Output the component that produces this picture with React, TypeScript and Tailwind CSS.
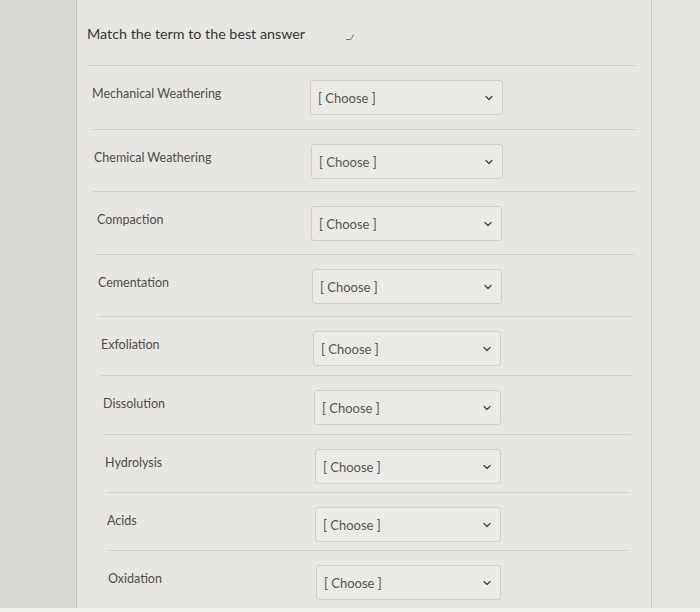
import { ChevronDown } from "lucide-react";

type Row = {
  term: string;
  rowClass: string;
  labelClass: string;
  boxClass: string;
};

// the photo is a bit skewed, so each row sits slightly further in
const rows: Row[] = [
  { term: "Mechanical Weathering", rowClass: "ml-[11px] mr-[14px] h-[64px]", labelClass: "pl-[4px] w-[222px]", boxClass: "w-[193px]" },
  { term: "Chemical Weathering", rowClass: "ml-[14px] mr-[15px] h-[62px]", labelClass: "pl-[3px] w-[220px]", boxClass: "w-[192px]" },
  { term: "Compaction", rowClass: "ml-[16px] mr-[16px] h-[63px]", labelClass: "pl-[4px] w-[218px]", boxClass: "w-[191px]" },
  { term: "Cementation", rowClass: "ml-[19px] mr-[17px] h-[62px]", labelClass: "pl-[2px] w-[216px]", boxClass: "w-[190px]" },
  { term: "Exfoliation", rowClass: "ml-[21px] mr-[18px] h-[59px]", labelClass: "pl-[3px] w-[215px]", boxClass: "w-[188px]" },
  { term: "Dissolution", rowClass: "ml-[24px] mr-[19px] h-[59px]", labelClass: "pl-[2px] w-[213px]", boxClass: "w-[187px]" },
  { term: "Hydrolysis", rowClass: "ml-[26px] mr-[20px] h-[58px]", labelClass: "pl-[2px] w-[212px]", boxClass: "w-[186px]" },
  { term: "Acids", rowClass: "ml-[29px] mr-[21px] h-[58px]", labelClass: "pl-[1px] w-[209px]", boxClass: "w-[186px]" },
  { term: "Oxidation", rowClass: "ml-[31px] mr-[23px] h-[57px]", labelClass: "pl-0 w-[208px]", boxClass: "w-[185px]" },
];

export default function App() {
  return (
    <div className="w-[700px] h-[612px] overflow-hidden bg-[#dddbd7] font-['Lato','Liberation_Sans',sans-serif] flex flex-col">
      <div className="flex flex-1">
        <div className="w-[76px] bg-[#dad8d4]"></div>
        <div className="w-[576px] border-x border-[#c4c2be] bg-[#e8e6e2] flex flex-col">
          <div className="pt-[24px] pl-[10px] h-[65px] flex items-start gap-[40px]">
            <h1 className="text-[14.3px] leading-[20px] text-[#353535]">
              Match the term to the best answer
            </h1>
            <svg width="10" height="8" viewBox="0 0 10 8" className="mt-[9px]">
              <path d="M1 6.5 L6 6.5 L8.5 1.5" fill="none" stroke="#777" strokeWidth="1" />
            </svg>
          </div>

          {rows.map((row) => (
            <QuestionRow key={row.term} row={row} />
          ))}
        </div>
        <div className="flex-1 bg-[#e5e3df]"></div>
      </div>
      <div className="h-[4px] bg-[#f1f0ed]"></div>
    </div>
  );
}

function QuestionRow({ row }: { row: Row }) {
  return (
    <div className={`${row.rowClass} border-t border-[#d3d0cb] flex items-start shrink-0`}>
      <div className={`${row.labelClass} mt-[20px] text-[12.5px] leading-[16px] text-[#4d4d4d]`}>
        {row.term}
      </div>
      <div
        className={`${row.boxClass} mt-[14px] h-[35px] border border-[#d0cecb] rounded-[3px] bg-[#eceae7] flex items-center justify-between pl-[7px] pr-[7px]`}
      >
        <span className="text-[13px] text-[#555] mt-[2px]">[ Choose ]</span>
        <ChevronDown size={12} strokeWidth={2.75} className="text-[#4a4a4a] mt-[1px]" />
      </div>
    </div>
  );
}
